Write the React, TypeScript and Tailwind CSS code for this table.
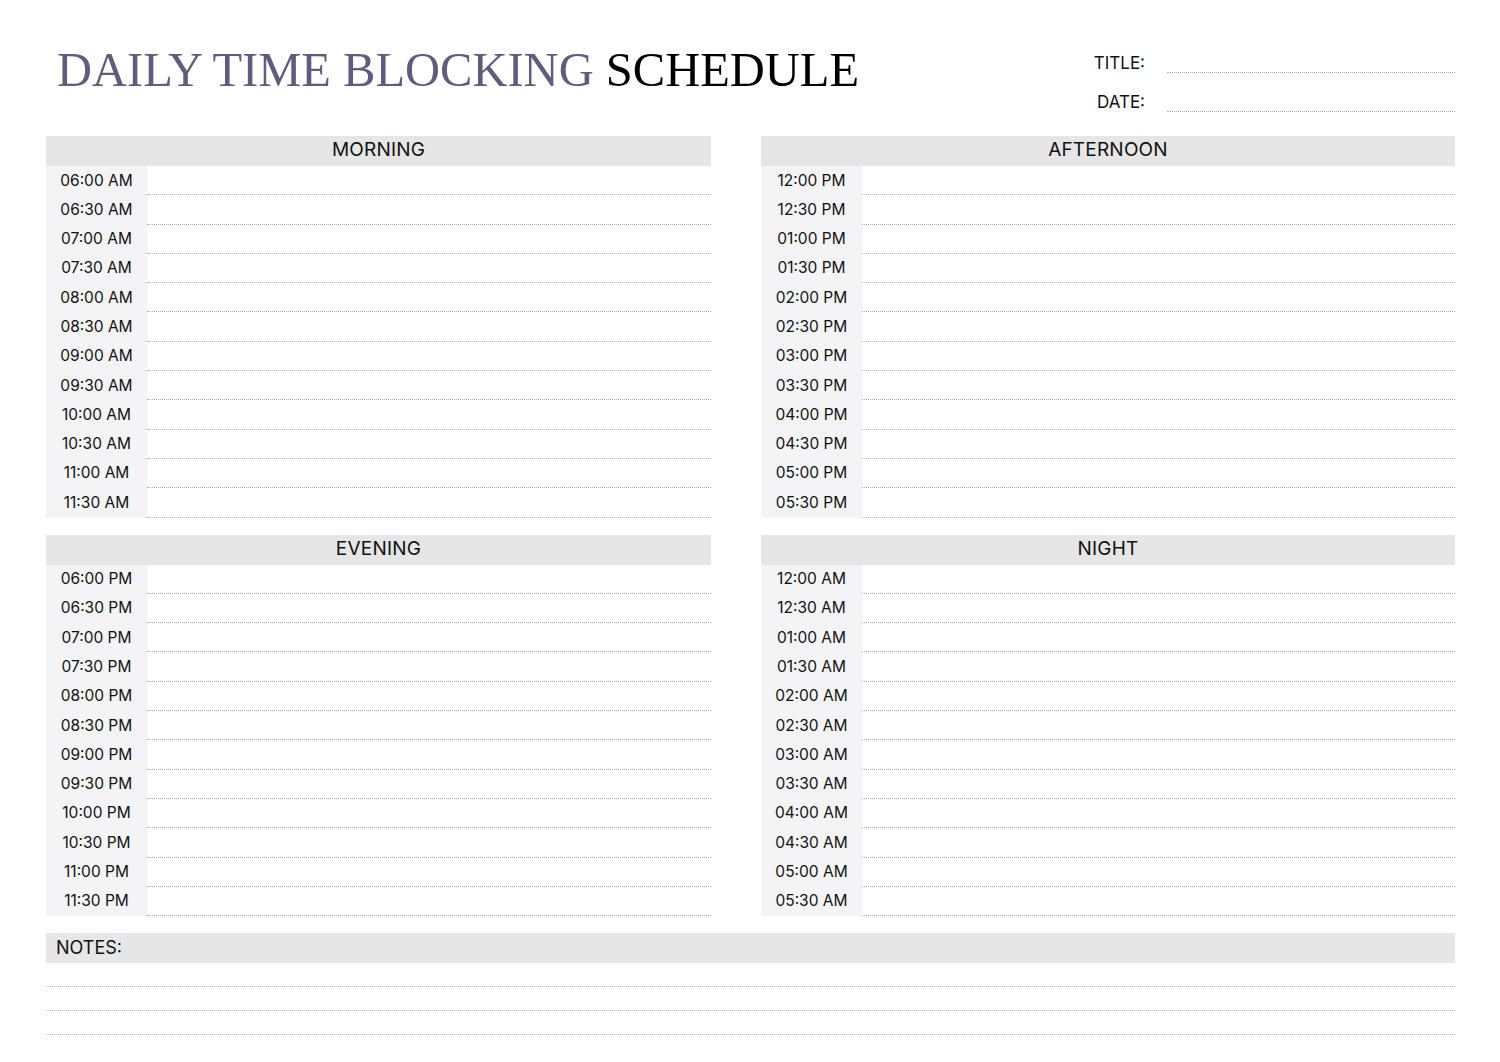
import React from 'react';

const sans = "font-['Inter','Lato',sans-serif]";

const morning = ['06:00 AM', '06:30 AM', '07:00 AM', '07:30 AM', '08:00 AM', '08:30 AM', '09:00 AM', '09:30 AM', '10:00 AM', '10:30 AM', '11:00 AM', '11:30 AM'];
const afternoon = ['12:00 PM', '12:30 PM', '01:00 PM', '01:30 PM', '02:00 PM', '02:30 PM', '03:00 PM', '03:30 PM', '04:00 PM', '04:30 PM', '05:00 PM', '05:30 PM'];
const evening = ['06:00 PM', '06:30 PM', '07:00 PM', '07:30 PM', '08:00 PM', '08:30 PM', '09:00 PM', '09:30 PM', '10:00 PM', '10:30 PM', '11:00 PM', '11:30 PM'];
const night = ['12:00 AM', '12:30 AM', '01:00 AM', '01:30 AM', '02:00 AM', '02:30 AM', '03:00 AM', '03:30 AM', '04:00 AM', '04:30 AM', '05:00 AM', '05:30 AM'];

const Block = ({ title, times }: { title: string; times: string[] }) => (
    <div className="flex flex-col">
        {/* Block header */}
        <div className="h-[30px] bg-[#e6e6e6] flex items-center justify-center pb-[1px] text-[19px] text-[#111] tracking-[0.2px]">
            {title}
        </div>
        {times.map((t) => (
            <div key={t} className="flex h-[29.3px]">
                <div className="w-[101px] bg-[#f4f4f6] flex items-center justify-center pb-[1px] text-[15.5px] text-[#111]">
                    {t}
                </div>
                <div className="flex-1 border-b border-dotted border-[#a9a6c6]" />
            </div>
        ))}
    </div>
);

const App = () => {
    return (
        <div className={`w-[1500px] h-[1062px] bg-white ${sans} overflow-hidden`}>
            {/* Header */}
            <div className="flex justify-between pl-[57px] pr-[45px] pt-[40px] h-[136px]">
                <h1 className="font-['Liberation_Serif',serif] text-[48.5px] leading-none mt-[6px]">
                    <span className="text-[#5f5d7e]">DAILY TIME BLOCKING</span>{' '}
                    <span className="text-black">SCHEDULE</span>
                </h1>
                <div className="flex flex-col gap-[22px] pt-[15px] w-[366px]">
                    <div className="flex items-end gap-[22px]">
                        <span className="w-[56px] text-right text-[17px] text-[#111] leading-none">TITLE:</span>
                        <div className="flex-1 border-b border-dotted border-[#a9a6c6] mb-[-1px]" />
                    </div>
                    <div className="flex items-end gap-[22px]">
                        <span className="w-[56px] text-right text-[17px] text-[#111] leading-none">DATE:</span>
                        <div className="flex-1 border-b border-dotted border-[#a9a6c6] mb-[-1px]" />
                    </div>
                </div>
            </div>

            {/* Time blocks */}
            <div className="pl-[46px] pr-[45px] grid grid-cols-[665px_694px] gap-x-[50px] gap-y-[17px]">
                <Block title="MORNING" times={morning} />
                <Block title="AFTERNOON" times={afternoon} />
                <Block title="EVENING" times={evening} />
                <Block title="NIGHT" times={night} />
            </div>

            {/* Notes */}
            <div className="pl-[46px] pr-[45px] mt-[17px]">
                <div className="h-[30px] bg-[#e6e6e6] flex items-center pl-[10px] pb-[2px] text-[18px] text-[#111]">NOTES:</div>
                <div className="h-[24px] border-b border-dotted border-[#a9a6c6]" />
                <div className="h-[24px] border-b border-dotted border-[#a9a6c6]" />
                <div className="h-[24px] border-b border-dotted border-[#a9a6c6]" />
            </div>
        </div>
    );
};

export default App;
